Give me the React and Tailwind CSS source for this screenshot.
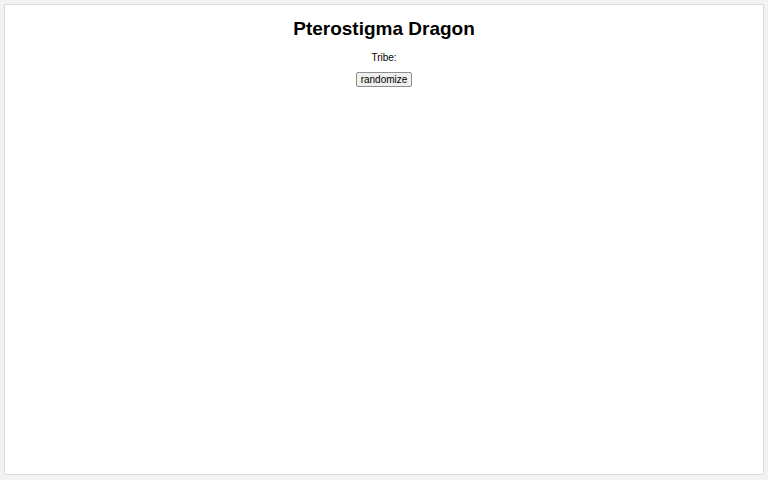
export default function App() {
  return (
    <div className="h-[480px] w-[768px] bg-[#f2f2f2] px-[4px] pb-[5px] pt-[4px] font-['Liberation_Sans',Arial,sans-serif]">
      <div className="flex h-full flex-col items-center border border-[#dcdcdc] bg-white pt-[13px]">
        <h1 className="text-[19px] font-bold leading-[22px] text-black">Pterostigma Dragon</h1>
        <p className="mt-[12px] text-[10px] leading-[12px] text-black">Tribe:</p>
        <button
          type="button"
          className="mt-[8px] h-[15px] rounded-[2px] border border-[#8f8f8f] bg-[#efefef] px-[4px] text-[10px] leading-[12px] text-black"
        >
          randomize
        </button>
      </div>
    </div>
  );
}
